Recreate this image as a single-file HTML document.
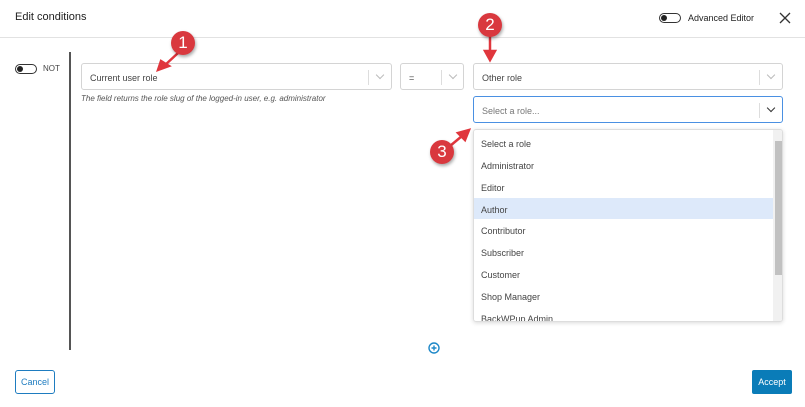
<!DOCTYPE html>
<html><head><style>
body{margin:0;width:805px;height:407px;background:#fff;font-family:"Liberation Sans",sans-serif;position:relative;overflow:hidden;color:#333}
.a{position:absolute}
.box{position:absolute;border:1px solid #d4d4d4;border-radius:3px;background:#fff;box-sizing:border-box;font-size:9px;color:#444}
.sep{position:absolute;top:6px;width:1px;height:15px;background:#ddd}
.chev{position:absolute;top:9px;width:5px;height:5px;border-right:1px solid #bbb;border-bottom:1px solid #bbb;transform:rotate(45deg)}
.tog{position:absolute;width:22px;height:10px;border:1px solid #333;border-radius:6px;box-sizing:border-box}
.tog:after{content:"";position:absolute;left:1px;top:1px;width:6px;height:6px;border-radius:50%;background:#222}
.it{position:absolute;left:8px;font-size:9px;color:#444}
.num{position:absolute;width:24px;height:24px;border-radius:50%;background:#d9383e;color:#fff;font-size:17px;text-align:center;line-height:24px;box-shadow:1px 2px 3px rgba(0,0,0,.35)}
</style></head><body>
<div class="a" style="left:15px;top:11px;font-size:11px;color:#222">Edit conditions</div>
<div class="tog" style="left:659px;top:13px"></div>
<div class="a" style="left:688px;top:13px;font-size:9px;color:#222">Advanced Editor</div>
<svg class="a" style="left:779px;top:12px" width="12" height="12"><path d="M1 1L11 11M11 1L1 11" stroke="#333" stroke-width="1.3"/></svg>
<div class="a" style="left:0;top:37px;width:805px;height:1px;background:#e2e2e2"></div>
<div class="tog" style="left:15px;top:64px"></div>
<div class="a" style="left:43px;top:64px;font-size:8px;color:#444">NOT</div>
<div class="a" style="left:69px;top:52px;width:2px;height:298px;background:#555"></div>

<div class="box" style="left:81px;top:63px;width:311px;height:27px"><span class="it" style="top:9px">Current user role</span><div class="sep" style="left:286px"></div><div class="chev" style="left:295px;top:8px"></div></div>
<div class="a" style="left:81px;top:94px;font-size:8px;font-style:italic;color:#555">The field returns the role slug of the logged-in user, e.g. administrator</div>
<div class="box" style="left:400px;top:63px;width:64px;height:27px"><span class="it" style="top:9px">=</span><div class="sep" style="left:40px"></div><div class="chev" style="left:49px;top:8px"></div></div>
<div class="box" style="left:473px;top:63px;width:310px;height:27px"><span class="it" style="top:9px">Other role</span><div class="sep" style="left:285px"></div><div class="chev" style="left:294px;top:8px"></div></div>
<div class="box" style="left:473px;top:96px;width:310px;height:27px;border-color:#4a90e2"><span class="it" style="top:9px;color:#777">Select a role...</span><div class="sep" style="left:285px"></div><div class="chev" style="left:294px;top:8px;border-color:#333"></div></div>

<div class="a" style="left:473px;top:129px;width:310px;height:193px;border:1px solid #ddd;border-radius:3px;box-shadow:0 1px 4px rgba(0,0,0,.15);overflow:hidden;font-size:9px;color:#444;box-sizing:border-box">
<div class="a" style="left:0;top:68px;width:300px;height:21px;background:#dde9fa"></div>
<div class="a" style="left:7px;top:9px">Select a role</div>
<div class="a" style="left:7px;top:31px">Administrator</div>
<div class="a" style="left:7px;top:53px">Editor</div>
<div class="a" style="left:7px;top:75px">Author</div>
<div class="a" style="left:7px;top:96px">Contributor</div>
<div class="a" style="left:7px;top:118px">Subscriber</div>
<div class="a" style="left:7px;top:140px">Customer</div>
<div class="a" style="left:7px;top:162px">Shop Manager</div>
<div class="a" style="left:7px;top:184px">BackWPup Admin</div>
<div class="a" style="left:299px;top:0;width:10px;height:193px;background:#f1f1f1"></div>
<div class="a" style="left:301px;top:11px;width:7px;height:134px;background:#c1c1c1"></div>
</div>

<svg class="a" style="left:428px;top:342px" width="12" height="12"><circle cx="6" cy="6" r="5" fill="none" stroke="#1e88c8" stroke-width="1.4"/><path d="M6 3.5V8.5M3.5 6H8.5" stroke="#1e88c8" stroke-width="1.4"/></svg>
<div class="a" style="left:15px;top:370px;width:40px;height:24px;border:1px solid #1e7cc0;border-radius:3px;box-sizing:border-box;font-size:9px;color:#1e7cc0;text-align:center;line-height:22px">Cancel</div>
<div class="a" style="left:752px;top:370px;width:40px;height:24px;background:#0a7cb8;border-radius:2px;font-size:9px;color:#fff;text-align:center;line-height:24px">Accept</div>

<svg class="a" style="left:0;top:0" width="805" height="407">
<g stroke="#e0363d" stroke-width="2.5" fill="#e0363d">
<line x1="178" y1="53" x2="164" y2="66"/><polygon points="158,70 161,61 169,66"/>
<line x1="490" y1="36" x2="490" y2="52"/><polygon points="490,60 485,51 495,51"/>
<line x1="450" y1="146" x2="462" y2="136"/><polygon points="469,130 465,140 458,133"/>
</g></svg>
<div class="num" style="left:171px;top:31px">1</div>
<div class="num" style="left:478px;top:13px">2</div>
<div class="num" style="left:430px;top:140px">3</div>
</body></html>
